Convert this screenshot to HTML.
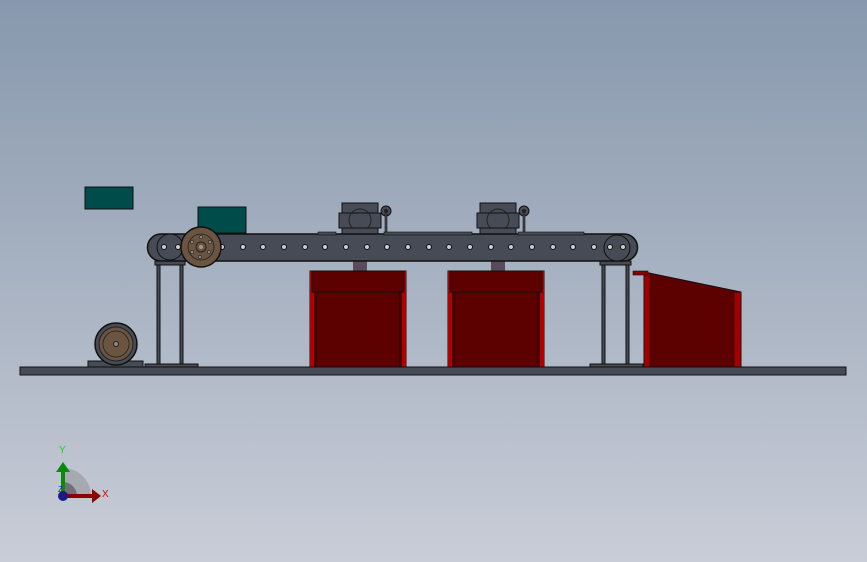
<!DOCTYPE html>
<html><head><meta charset="utf-8"><style>
html,body{margin:0;padding:0;width:867px;height:562px;overflow:hidden}
body{background:linear-gradient(#8798ad,#c9cdd7);font-family:"Liberation Sans",sans-serif}
svg{display:block}
</style></head><body>
<svg width="867" height="562" viewBox="0 0 867 562" xmlns="http://www.w3.org/2000/svg">
<defs>
<g id="carr">
<rect x="342" y="203" width="36" height="11" fill="#474b55" stroke="#111" stroke-width="1"/>
<rect x="339" y="213" width="42" height="15" fill="#474b55" stroke="#111" stroke-width="1"/>
<circle cx="360" cy="220" r="11" fill="none" stroke="#222" stroke-width="1"/>
<rect x="342" y="228" width="36" height="8" fill="#474b55" stroke="#111" stroke-width="1"/>
<circle cx="386" cy="211" r="5" fill="#474b55" stroke="#111"/>
<circle cx="386" cy="211" r="2" fill="#222"/>
<rect x="385" y="214" width="2" height="20" fill="#474b55" stroke="#111" stroke-width=".6"/>
<rect x="353" y="261" width="14" height="11" fill="#5b4a5c"/>
</g>
<g id="rbox">
<rect x="310" y="271" width="96" height="96" fill="#5c0000" stroke="#111"/>
<rect x="310" y="271" width="4" height="96" fill="#b00000"/>
<rect x="402" y="271" width="4" height="96" fill="#b00000"/>
<rect x="312" y="271" width="92" height="21" fill="#5c0000" stroke="#111"/>
<line x1="316" y1="292" x2="316" y2="367" stroke="#111"/>
<line x1="400" y1="292" x2="400" y2="367" stroke="#111"/>
</g>
</defs>
<rect x="85" y="187" width="48" height="22" fill="#004c4a" stroke="#111"/>
<rect x="198" y="207" width="48" height="26" fill="#004c4a" stroke="#111"/>
<use href="#carr"/>
<use href="#carr" transform="translate(138,0)"/>
<g fill="#474b55" stroke="#111" stroke-width="1">
<rect x="157" y="261" width="3" height="104"/><rect x="180" y="261" width="3" height="104"/>
<rect x="155" y="261" width="30" height="4"/>
<rect x="145" y="364" width="53" height="3"/>
<rect x="602" y="261" width="3" height="104"/><rect x="626" y="261" width="3" height="104"/>
<rect x="600" y="261" width="31" height="4"/>
<rect x="590" y="364" width="53" height="3"/>
</g>
<path d="M161 234 H624 A13.5 13.5 0 0 1 624 261 H161 A13.5 13.5 0 0 1 161 234 Z" fill="#474b55" stroke="#111" stroke-width="1.5"/>
<rect x="318" y="232" width="18" height="3" fill="#474b55" stroke="#111" stroke-width=".6"/>
<rect x="384" y="232" width="88" height="3" fill="#474b55" stroke="#111" stroke-width=".6"/>
<rect x="518" y="232" width="66" height="3" fill="#474b55" stroke="#111" stroke-width=".6"/>
<circle cx="170" cy="247" r="13" fill="#474b55" stroke="#111"/>
<circle cx="617" cy="248" r="13" fill="#474b55" stroke="#111"/>
<g fill="#c8ccd6" stroke="#111" stroke-width="1">
<circle cx="164" cy="247" r="2.5"/><circle cx="178" cy="247" r="2.5"/>
<circle cx="610" cy="247" r="2.5"/><circle cx="623" cy="247" r="2.5"/>
<circle cx="222" cy="247" r="2.5"/><circle cx="243" cy="247" r="2.5"/><circle cx="263" cy="247" r="2.5"/><circle cx="284" cy="247" r="2.5"/><circle cx="305" cy="247" r="2.5"/><circle cx="325" cy="247" r="2.5"/><circle cx="346" cy="247" r="2.5"/><circle cx="367" cy="247" r="2.5"/><circle cx="387" cy="247" r="2.5"/><circle cx="408" cy="247" r="2.5"/><circle cx="429" cy="247" r="2.5"/><circle cx="449" cy="247" r="2.5"/><circle cx="470" cy="247" r="2.5"/><circle cx="491" cy="247" r="2.5"/><circle cx="511" cy="247" r="2.5"/><circle cx="532" cy="247" r="2.5"/><circle cx="553" cy="247" r="2.5"/><circle cx="573" cy="247" r="2.5"/><circle cx="594" cy="247" r="2.5"/>
</g>
<circle cx="201" cy="247" r="20" fill="#6b5440" stroke="#111" stroke-width="1.5"/>
<circle cx="201" cy="247" r="13" fill="none" stroke="#222" stroke-width=".8"/>
<circle cx="201" cy="247" r="5" fill="none" stroke="#222"/>
<circle cx="201" cy="247" r="2" fill="#999"/>
<g fill="#888" stroke="#222" stroke-width=".6">
<circle cx="201" cy="237" r="1.6"/><circle cx="210" cy="242" r="1.6"/><circle cx="209" cy="252" r="1.6"/><circle cx="200" cy="257" r="1.6"/><circle cx="192" cy="252" r="1.6"/><circle cx="192" cy="242" r="1.6"/>
</g>
<rect x="88" y="361" width="55" height="6" fill="#474b55" stroke="#111"/>
<circle cx="116" cy="344" r="21" fill="#474b55" stroke="#111" stroke-width="1.5"/>
<circle cx="116" cy="344" r="17" fill="#6b5440" stroke="#222"/>
<circle cx="116" cy="344" r="13" fill="none" stroke="#222" stroke-width=".8"/>
<circle cx="116" cy="344" r="2.5" fill="#888" stroke="#222"/>
<use href="#rbox"/>
<use href="#rbox" transform="translate(138,0)"/>
<path d="M644 272 L741 292 V367 H644 Z" fill="#5c0000" stroke="#111"/>
<rect x="644" y="273" width="6" height="94" fill="#a00000" stroke="#111" stroke-width=".6"/>
<rect x="734" y="292" width="7" height="75" fill="#a00000" stroke="#111" stroke-width=".6"/>
<rect x="633" y="271" width="15" height="4" fill="#8a0000" stroke="#111" stroke-width=".6"/>
<rect x="20" y="367" width="826" height="8" fill="#474b55" stroke="#111"/>
<path d="M63 496 V468 A28 28 0 0 1 91 496 Z" fill="#a6a9ae"/>
<path d="M63 496 V482 A14 14 0 0 1 77 496 Z" fill="#6e7177"/>
<rect x="61" y="470" width="4" height="26" fill="#0a8a0a"/>
<path d="M56 472 L63 462 L70 472 Z" fill="#0a8a0a"/>
<rect x="63" y="494" width="30" height="4" fill="#8a0000"/>
<path d="M92 489 L101 496 L92 503 Z" fill="#8a0000"/>
<circle cx="63" cy="496" r="5" fill="#1a1a8a"/>
<text x="59" y="453" font-size="10" fill="#1ad01a">Y</text>
<text x="102" y="497" font-size="10" fill="#e00000">X</text>
<text x="58" y="492" font-size="8" fill="#2020d0">Z</text>
</svg>
</body></html>
